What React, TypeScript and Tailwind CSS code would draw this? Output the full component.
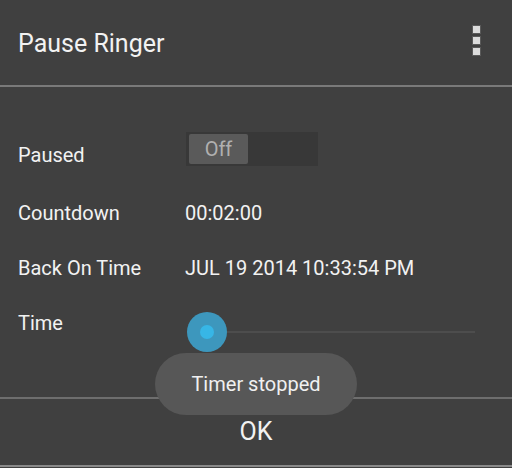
export default function App() {
  return (
    <div
      className="relative w-[512px] h-[468px] bg-[#404040] flex flex-col text-[#f2f2f2] overflow-hidden"
      style={{ fontFamily: "Roboto, 'Liberation Sans', sans-serif" }}
    >
      {/* header */}
      <div className="h-[85px] flex items-center justify-between pl-[18px] pr-[32px]">
        <h1 className="text-[25px] leading-none mt-[2px]">Pause Ringer</h1>
        <div className="flex flex-col gap-[4px] -mt-[5px]">
          <span className="block w-[7px] h-[7px] bg-[#dcdcdc] outline outline-1 outline-[#5a5a5a]" />
          <span className="block w-[7px] h-[7px] bg-[#dcdcdc] outline outline-1 outline-[#5a5a5a]" />
          <span className="block w-[7px] h-[7px] bg-[#dcdcdc] outline outline-1 outline-[#5a5a5a]" />
        </div>
      </div>
      <div className="h-[2px] bg-[#7a7a7a]" />

      {/* settings */}
      <div className="flex-1 flex flex-col pt-[45px] text-[20px]">
        <div className="h-[46px] flex">
          <span className="w-[186px] pl-[18px] self-center">Paused</span>
          <div className="w-[132px] h-[34px] bg-[#383838] flex items-center pl-[3px]">
            <div className="w-[59px] h-[30px] bg-[#5a5a5a] rounded-[2px] flex items-center justify-center text-[#b0b0b0] text-[20px]">
              Off
            </div>
          </div>
        </div>
        <div className="h-[46px] flex items-center mt-[12px]">
          <span className="w-[185px] pl-[18px]">Countdown</span>
          <span>00:02:00</span>
        </div>
        <div className="h-[46px] flex items-center mt-[9px]">
          <span className="w-[185px] pl-[18px]">Back On Time</span>
          <span>JUL 19 2014 10:33:54 PM</span>
        </div>
        <div className="h-[46px] flex mt-[9px]">
          <span className="w-[185px] pl-[18px] self-center">Time</span>
          <div className="relative w-[290px] h-[40px] mt-[12px] flex items-center">
            <div className="absolute left-[22px] right-0 top-[19px] h-[2px] bg-[#4d4d4d]" />
            <div className="relative ml-[2px] w-[40px] h-[40px] rounded-full bg-[#3d97bd] flex items-center justify-center">
              <div className="w-[14px] h-[14px] rounded-full bg-[#37b6e6]" />
            </div>
          </div>
        </div>
      </div>

      {/* footer */}
      <div className="h-[2px] bg-[#6e6e6e]" />
      <button className="h-[66px] flex items-center justify-center text-[25px] text-[#f2f2f2]">OK</button>
      <div className="h-[2px] bg-[#8a8a8a]" />
      <div className="h-[1px] bg-[#404040]" />

      {/* toast */}
      <div className="absolute left-[155px] top-[353px] w-[202px] h-[62px] rounded-full bg-[#575757] flex items-center justify-center">
        <span className="text-[20px] text-[#f0f0f0]">Timer stopped</span>
      </div>
    </div>
  );
}
